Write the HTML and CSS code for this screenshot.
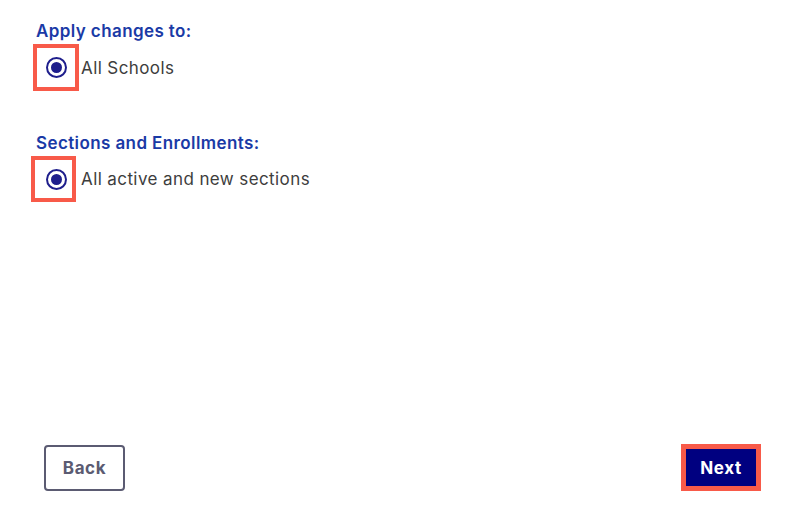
FILE: index.html
```html
<!DOCTYPE html>
<html>
<head>
<meta charset="utf-8">
<link rel="stylesheet" href="styles.css">
</head>
<body>
<div class="page">
  <div class="content">
    <section class="group first">
      <h2 class="label">Apply changes to:</h2>
      <label class="option">
        <span class="mark mark-a"><span class="radio"><span class="dot"></span></span></span>
        <span class="text">All Schools</span>
      </label>
    </section>
    <section class="group second">
      <h2 class="label">Sections and Enrollments:</h2>
      <label class="option">
        <span class="mark mark-b"><span class="radio"><span class="dot"></span></span></span>
        <span class="text">All active and new sections</span>
      </label>
    </section>
  </div>
  <div class="footer">
    <button class="btn back">Back</button>
    <span class="next-wrap"><button class="btn next">Next</button></span>
  </div>
</div>
</body>
</html>
```
FILE: styles.css
```css
html, body {
  margin: 0;
  padding: 0;
  background: #ffffff;
}
body {
  font-family: Inter, "Noto Sans", "Liberation Sans", sans-serif;
}
.page {
  width: 788px;
  height: 526px;
  display: flex;
  flex-direction: column;
  justify-content: space-between;
  box-sizing: border-box;
}
.content {
  padding-left: 36px;
  padding-top: 20px;
}
.group.second {
  margin-top: 41px;
}
.label {
  margin: 0;
  font-size: 17px;
  line-height: 22px;
  font-weight: 600;
  letter-spacing: 0.4px;
  color: #1a3aa6;
}
.option {
  display: flex;
  align-items: center;
  margin-top: 2px;
}
.mark {
  display: flex;
  align-items: center;
  justify-content: center;
  box-sizing: border-box;
  border: 4px solid #f85a49;
  margin-left: -3px;
  width: 46px;
  height: 47px;
}
.mark-b {
  margin-left: -5px;
  width: 45px;
  height: 46px;
  justify-content: flex-end;
  padding-right: 5px;
}
.radio {
  box-sizing: border-box;
  width: 21px;
  height: 21px;
  border: 2px solid #1e1e8c;
  border-radius: 50%;
  display: flex;
  align-items: center;
  justify-content: center;
}
.dot {
  width: 11px;
  height: 11px;
  border-radius: 50%;
  background: #1e1e8c;
}
.text {
  font-size: 17px;
  letter-spacing: 0.4px;
  color: #3d3d3d;
  margin-left: 2px;
}
.mark-b + .text {
  margin-left: 5px;
}
.footer {
  display: flex;
  justify-content: space-between;
  align-items: center;
  padding: 0 27px 35px 44px;
}
.btn {
  font-family: Inter, "Noto Sans", "Liberation Sans", sans-serif;
  font-size: 17px;
  font-weight: 700;
  letter-spacing: 0.6px;
  cursor: pointer;
}
.back {
  width: 81px;
  height: 46px;
  background: #ffffff;
  border: 2px solid #5b5b72;
  border-radius: 4px;
  color: #5b5b72;
}
.next-wrap {
  display: flex;
  border: 5px solid #f85a49;
}
.next {
  width: 70px;
  height: 37px;
  background: #000080;
  border: none;
  border-radius: 0;
  color: #ffffff;
}
```
